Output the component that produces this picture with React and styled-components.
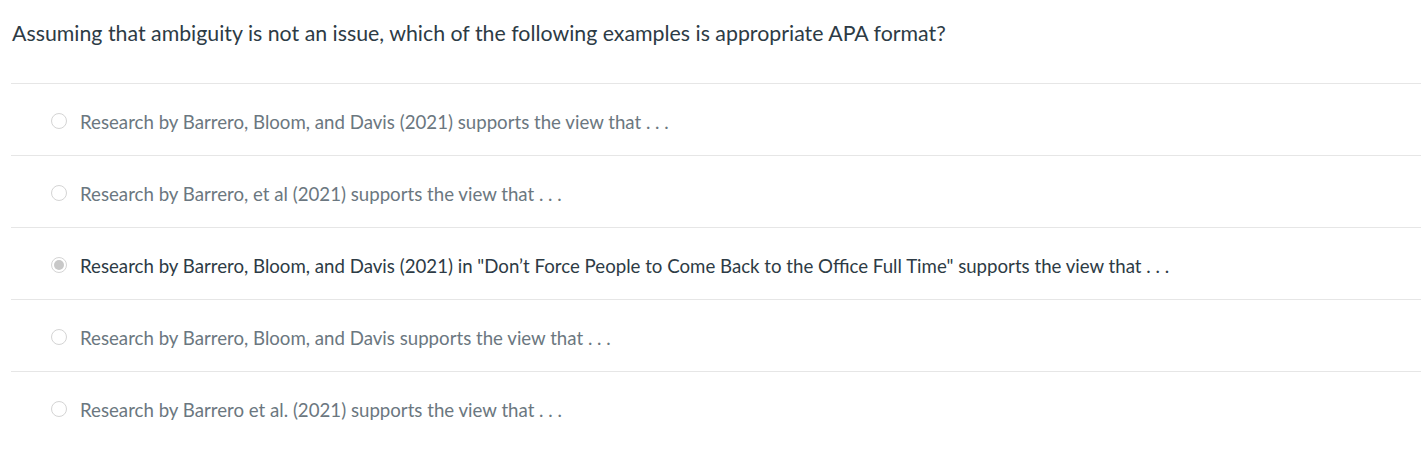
import React, { useState } from "react";
import styled, { createGlobalStyle } from "styled-components";

const Global = createGlobalStyle`
  body {
    margin: 0;
    background: #ffffff;
    font-family: Lato, "Helvetica Neue", Arial, sans-serif;
  }
`;

const Wrap = styled.div`
  padding-left: 11px;
`;

const Question = styled.div`
  padding: 17px 0 0 1px;
  height: 83px;
  box-sizing: border-box;
  font-size: 21.33px;
  line-height: 32px;
  color: #2d3b45;
`;

const List = styled.div`
  display: flex;
  flex-direction: column;
`;

const Row = styled.label`
  display: flex;
  align-items: center;
  gap: 13px;
  border-top: 1px solid #e6e6e6;
  padding: 24px 0 19px 40px;
  font-size: 18.67px;
  line-height: 28px;
  color: ${(p) => (p.$selected ? "#2d3b45" : "#6b7780")};
  cursor: pointer;
`;

const Radio = styled.span`
  flex: none;
  box-sizing: border-box;
  width: 16px;
  height: 16px;
  margin-top: -2px;
  border-radius: 50%;
  border: 1px solid #d4d4d4;
  background: #fff;
  display: flex;
  align-items: center;
  justify-content: center;
  &::after {
    content: "";
    width: 10px;
    height: 10px;
    border-radius: 50%;
    background: ${(p) => (p.$selected ? "#c8c8c8" : "transparent")};
  }
`;

const answers = [
  "Research by Barrero, Bloom, and Davis (2021) supports the view that . . .",
  "Research by Barrero, et al (2021) supports the view that . . .",
  "Research by Barrero, Bloom, and Davis (2021) in \"Don\u2019t Force People to Come Back to the Office Full Time\" supports the view that . . .",
  "Research by Barrero, Bloom, and Davis supports the view that . . .",
  "Research by Barrero et al. (2021) supports the view that . . .",
];

export default function App() {
  const [picked, setPicked] = useState(2);
  return (
    <Wrap>
      <Global />
      <Question>
        Assuming that ambiguity is not an issue, which of the following examples is appropriate APA format?
      </Question>
      <List>
        {answers.map((a, i) => (
          <Row key={i} $selected={picked === i} onClick={() => setPicked(i)}>
            <Radio $selected={picked === i} />
            <span>{a}</span>
          </Row>
        ))}
      </List>
    </Wrap>
  );
}
